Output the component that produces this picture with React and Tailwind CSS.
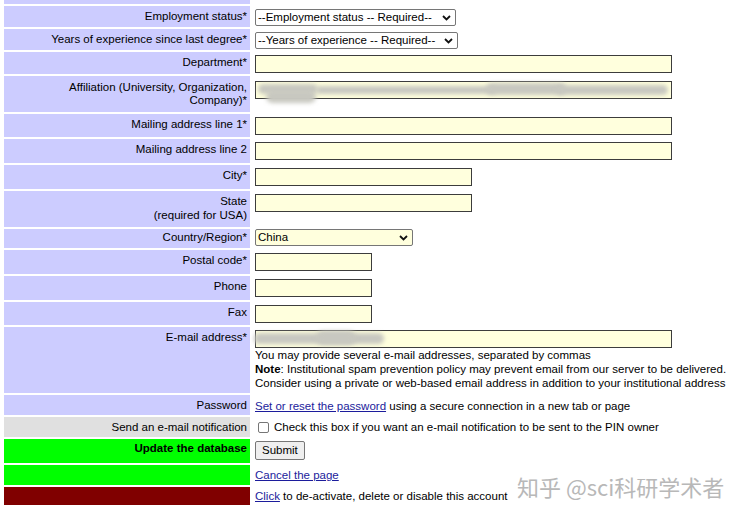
import React from "react";

const Chevron = () => (
  <svg width="9" height="6" viewBox="0 0 9 6" className="shrink-0">
    <path d="M1 1 L4.5 4.5 L8 1" fill="none" stroke="#111" strokeWidth="1.8" />
  </svg>
);

const Select = ({ width, text, yellow }) => (
  <div
    className={`flex items-center justify-between h-[17px] border border-[#767676] rounded-[2px] pl-[2px] pr-[4px] ${
      yellow ? "bg-[#ffffdd]" : "bg-white"
    }`}
    style={{ width }}
  >
    <span className="leading-[15px] whitespace-nowrap">{text}</span>
    <Chevron />
  </div>
);

const Input = ({ width, children }) => (
  <div
    className="relative h-[18px] border border-[#3c3c3c] bg-[#ffffdd]"
    style={{ width }}
  >
    {children}
  </div>
);

// blurred-out personal data
const Smudge = ({ className }) => (
  <div className={`absolute rounded-full bg-[#c8c8c0] blur-[2px] ${className}`} />
);

const Row = ({
  h,
  label,
  bg = "bg-[#ccccff]",
  labelClass = "pt-[3px] leading-[14px]",
  children,
  pt = "pt-[3px]",
}) => (
  <div className="flex" style={{ height: h }}>
    <div className={`w-[246px] shrink-0 text-right pr-[3px] ${bg} ${labelClass}`}>
      {label}
    </div>
    <div className={`flex-1 pl-[5px] ${pt}`}>{children}</div>
  </div>
);

const linkCls = "text-[#1c1c9c] underline";

export default function App() {
  return (
    <div className="relative w-[739px] h-[518px] overflow-hidden bg-white text-black text-[11.5px] font-['Liberation_Sans',Arial,sans-serif]">
      <div className="flex flex-col gap-[2px] pl-[4px]">
        {/* cut-off row above */}
        <div className="flex h-[4px]">
          <div className="w-[246px] bg-[#ccccff]" />
        </div>

        <Row h={21} label="Employment status*">
          <Select width={201} text="--Employment status -- Required--" />
        </Row>
        <Row h={21} label="Years of experience since last degree*">
          <Select width={203} text="--Years of experience -- Required--" />
        </Row>
        <Row h={22} label="Department*">
          <Input width={417} />
        </Row>
        <Row
          h={36}
          label={
            <>
              Affiliation (University, Organization,
              <br />
              Company)*
            </>
          }
          labelClass="pt-[5px] leading-[13px]"
          pt="pt-[5px]"
        >
          <Input width={417}>
            <Smudge className="left-[2px] top-[2px] w-[60px] h-[10px]" />
            <Smudge className="left-[10px] top-[8px] w-[50px] h-[13px]" />
            <Smudge className="left-[60px] top-[4px] w-[180px] h-[8px]" />
            <Smudge className="left-[230px] top-[1px] w-[80px] h-[12px]" />
            <Smudge className="left-[300px] top-[3px] w-[112px] h-[10px]" />
          </Input>
        </Row>
        <Row h={23} label="Mailing address line 1*">
          <Input width={417} />
        </Row>
        <Row h={24} label="Mailing address line 2">
          <Input width={417} />
        </Row>
        <Row h={24} label="City*">
          <Input width={217} />
        </Row>
        <Row
          h={36}
          label={
            <>
              State
              <br />
              (required for USA)
            </>
          }
        >
          <Input width={217} />
        </Row>
        <Row
          h={19}
          label="Country/Region*"
          labelClass="pt-[1px] leading-[14px]"
          pt="pt-0"
        >
          <Select width={158} text="China" yellow />
        </Row>
        <Row h={24} label="Postal code*">
          <Input width={117} />
        </Row>
        <Row h={24} label="Phone">
          <Input width={117} />
        </Row>
        <Row h={23} label="Fax">
          <Input width={117} />
        </Row>
        <Row h={66} label="E-mail address*">
          <Input width={417}>
            <Smudge className="-left-[2px] top-[2px] w-[130px] h-[11px]" />
            <Smudge className="left-[60px] top-[0px] w-[40px] h-[14px]" />
          </Input>
          <div className="leading-[14px] whitespace-nowrap">
            You may provide several e-mail addresses, separated by commas
            <br />
            <b>Note</b>: Institutional spam prevention policy may prevent email from our server to be delivered.
            <br />
            Consider using a private or web-based email address in addition to your institutional address
          </div>
        </Row>
        <Row h={20} label="Password">
          <span className="leading-[14px] whitespace-nowrap">
            <a className={linkCls}>Set or reset the password</a> using a secure
            connection in a new tab or page
          </span>
        </Row>
        <Row h={20} label="Send an e-mail notification" bg="bg-[#e0e0e0]">
          <div className="flex items-center gap-[5px] pl-[3px] leading-[14px] whitespace-nowrap">
            <span className="w-[11px] h-[11px] border border-[#767676] rounded-[2px] bg-white" />
            Check this box if you want an e-mail notification to be sent to the PIN owner
          </div>
        </Row>
        <Row
          h={24}
          label="Update the database"
          bg="bg-[#00ff00]"
          labelClass="pt-[2px] leading-[14px] font-bold"
          pt="pt-[2px]"
        >
          <button className="h-[19px] px-[6px] border border-[#767676] rounded-[2px] bg-[#efefef] leading-[15px]">
            Submit
          </button>
        </Row>
        <Row h={20} label="" bg="bg-[#00ff00]" pt="pt-[2px]">
          <a className={`${linkCls} leading-[14px]`}>Cancel the page</a>
        </Row>
        <Row h={18} label="" bg="bg-[#800000]" pt="pt-[1px]">
          <span className="leading-[14px] whitespace-nowrap">
            <a className={linkCls}>Click</a> to de-activate, delete or disable
            this account
          </span>
        </Row>
      </div>

      {/* watermark */}
      <div className="absolute left-[517px] top-[472px] text-[22px] leading-[28px] text-[#b8b8b8] whitespace-nowrap font-['Noto_Sans_CJK_SC',sans-serif]">
        知乎 @sci科研学术者
      </div>
    </div>
  );
}
